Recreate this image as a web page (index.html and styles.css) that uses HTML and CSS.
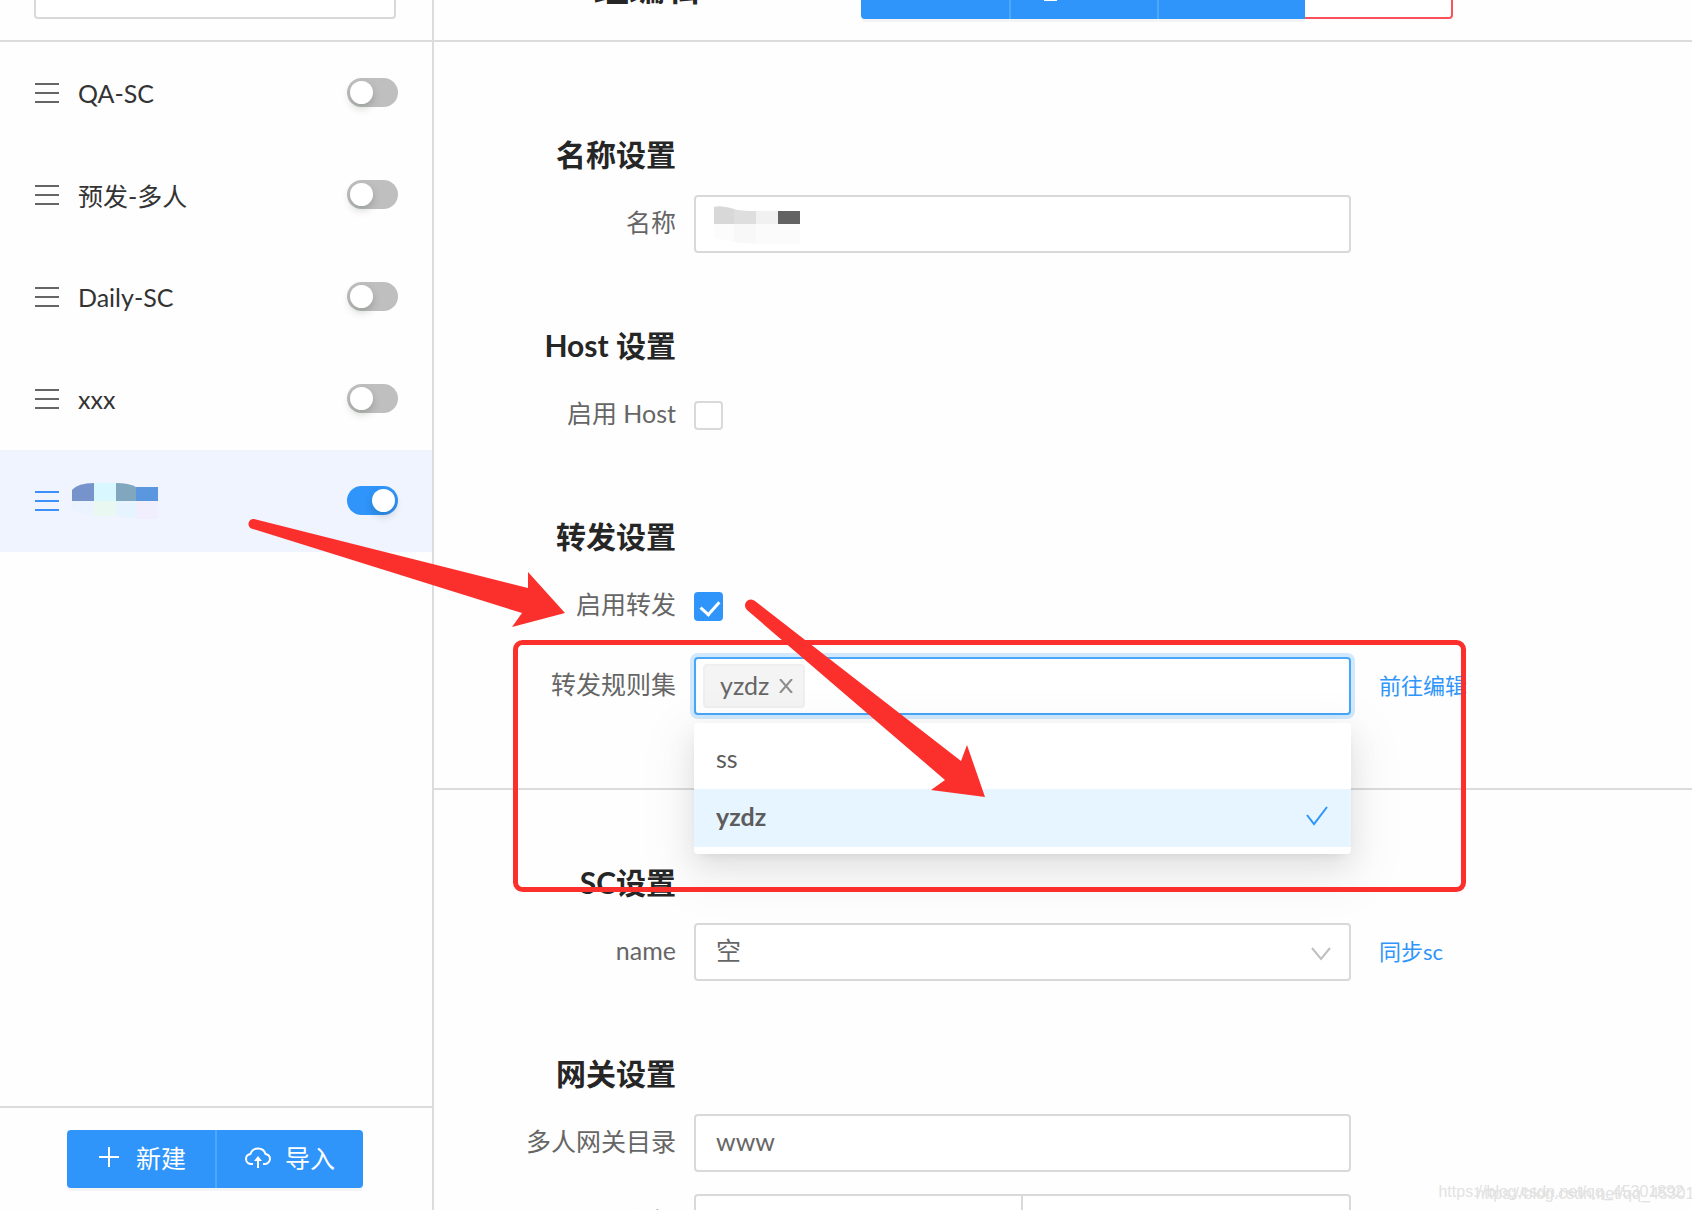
FILE: index.html
```html
<!DOCTYPE html>
<html lang="zh-CN">
<head>
    <meta charset="UTF-8">
    <meta name="viewport" content="width=device-width, initial-scale=1.0">
    <title>组编辑</title>
    <link rel="stylesheet" href="styles.css">
</head>
<body>

    <div class="app">
        <aside class="sidebar">
            <div class="topbar topbar-search">
                <input type="text" class="field" aria-label="搜索">
            </div>

            <ul class="groups">
                <li class="group">
                    <svg class="handle" viewBox="0 0 24 24"><path d="M0 3h24M0 12h24M0 21h24"/></svg>
                    <label class="group-name" for="g1">QA-SC</label>
                    <input type="checkbox" role="switch" class="switch" id="g1">
                </li>
                <li class="group">
                    <svg class="handle" viewBox="0 0 24 24"><path d="M0 3h24M0 12h24M0 21h24"/></svg>
                    <label class="group-name" for="g2">预发-多人</label>
                    <input type="checkbox" role="switch" class="switch" id="g2">
                </li>
                <li class="group">
                    <svg class="handle" viewBox="0 0 24 24"><path d="M0 3h24M0 12h24M0 21h24"/></svg>
                    <label class="group-name" for="g3">Daily-SC</label>
                    <input type="checkbox" role="switch" class="switch" id="g3">
                </li>
                <li class="group">
                    <svg class="handle" viewBox="0 0 24 24"><path d="M0 3h24M0 12h24M0 21h24"/></svg>
                    <label class="group-name" for="g4">xxx</label>
                    <input type="checkbox" role="switch" class="switch" id="g4">
                </li>
                <li class="group active">
                    <svg class="handle" viewBox="0 0 24 24"><path d="M0 3h24M0 12h24M0 21h24"/></svg>
                    <label class="group-name" for="g5">
                        <svg class="mosaic" viewBox="0 0 86 36" role="img" aria-label="yzdz">
                            <path fill="#7693cb" d="M0 18V7Q6 0 22 0V18z"/>
                            <path fill="#d9f7fe" d="M22 0h22v18H22z"/>
                            <path fill="#81a7be" d="M44 0Q57 0 64 4V18H44z"/>
                            <path fill="#5b97de" d="M64 4h22v14H64z"/>
                            <path fill="#ebf3ff" d="M0 18h22v14Q8 31 0 26z"/>
                            <path fill="#e9f8f0" d="M22 18h22v15H22z"/>
                            <path fill="#e5f4fe" d="M44 18h20v17Q52 35 44 32z"/>
                            <path fill="#f1effd" d="M64 18h22v18H64z"/>
                        </svg>
                    </label>
                    <input type="checkbox" role="switch" class="switch" id="g5" checked>
                </li>
            </ul>

            <div class="sidebar-foot">
                <div class="btn-group">
                    <button type="button" class="btn">
                        <svg class="icon" viewBox="0 0 26 26"><path d="M13 3v20M3 13h20"/></svg>
                        新建
                    </button>
                    <button type="button" class="btn">
                        <svg class="icon" viewBox="0 0 26 26">
                            <path d="M8 20H6.500C3.500 20 1 18 1 15S3 10.500 5.500 10C6.500 6.500 9.500 4.500 13 4.500S19.500 6.500 20.500 10C23 10.500 25 12.500 25 15S22.500 20 19.500 20H18M13 24V14"/>
                            <path class="solid" d="M13 12l4 5H9z"/>
                        </svg>
                        导入
                    </button>
                </div>
            </div>
        </aside>

        <main class="main">
            <header class="topbar topbar-main">
                <h1 class="title">组编辑</h1>
                <div class="btn-group">
                    <button type="button" class="btn" aria-label="保存"></button>
                    <button type="button" class="btn btn-icon" aria-label="复制">
                        <svg class="icon" viewBox="0 0 26 26"><path d="M8 3v20h11V3z"/></svg>
                    </button>
                    <button type="button" class="btn" aria-label="导出"></button>
                    <button type="button" class="btn btn-danger" aria-label="删除"></button>
                </div>
            </header>

            <form class="form">
                <section class="section">
                    <h2 class="heading">名称设置</h2>
                    <div class="row">
                        <label class="label" for="name">名称</label>
                        <div class="control">
                            <input type="text" class="field" id="name">
                            <svg class="mosaic mosaic-field" viewBox="0 0 86 38">
                                <path fill="#d8d8d8" d="M0 18V1Q6-1 20 3V18z"/>
                                <path fill="#dedede" d="M20 3Q26 5 42 5V18H20z"/>
                                <path fill="#f1f1f1" d="M42 5h22v13H42z"/>
                                <path fill="#626262" d="M64 5h22v13H64z"/>
                                <path fill="#fcfcfc" d="M0 18h20v18L0 32z"/>
                                <path fill="#f8f8f8" d="M20 18h22v20L20 36z"/>
                                <path fill="#fbfbfb" d="M42 18h44v20H42z"/>
                            </svg>
                        </div>
                    </div>
                </section>

                <section class="section">
                    <h2 class="heading">Host 设置</h2>
                    <div class="row">
                        <label class="label" for="host-on">启用 Host</label>
                        <input type="checkbox" class="check" id="host-on">
                    </div>
                </section>

                <section class="section">
                    <h2 class="heading">转发设置</h2>
                    <div class="row">
                        <label class="label" for="forward-on">启用转发</label>
                        <input type="checkbox" class="check" id="forward-on" checked>
                    </div>
                    <div class="row">
                        <label class="label" for="rules">转发规则集</label>
                        <div class="control">
                            <div class="field tags">
                                <span class="tag">yzdz
                                    <button type="button" class="tag-close" aria-label="移除">
                                        <svg viewBox="0 0 14 14"><path d="M1 0l12 14M13 0L1 14"/></svg>
                                    </button>
                                </span>
                                <input type="text" class="tags-input" id="rules" role="combobox" aria-expanded="true" aria-controls="rules-list">
                            </div>
                            <ul class="dropdown" id="rules-list" role="listbox">
                                <li class="option" role="option">ss</li>
                                <li class="option selected" role="option" aria-selected="true">yzdz
                                    <svg class="option-check" viewBox="0 0 24 20"><path d="M2 9l7 9L22 1"/></svg>
                                </li>
                            </ul>
                        </div>
                        <a class="link" href="#">前往编辑</a>
                    </div>
                </section>

                <hr class="divider">

                <section class="section">
                    <h2 class="heading">SC设置</h2>
                    <div class="row">
                        <label class="label" for="sc-name">name</label>
                        <div class="control">
                            <select class="field" id="sc-name">
                                <option>空</option>
                            </select>
                            <svg class="arrow" viewBox="0 0 20 14"><path d="M1 1l9 11 9-11"/></svg>
                        </div>
                        <a class="link" href="#">同步sc</a>
                    </div>
                </section>

                <section class="section">
                    <h2 class="heading">网关设置</h2>
                    <div class="row">
                        <label class="label" for="gateway">多人网关目录</label>
                        <div class="control">
                            <input type="text" class="field" id="gateway" value="www">
                        </div>
                    </div>
                    <div class="row">
                        <label class="label" for="gateway-host">主机</label>
                        <div class="control pair">
                            <input type="text" class="field" id="gateway-host">
                            <input type="text" class="field" aria-label="端口">
                        </div>
                    </div>
                </section>
            </form>
        </main>
    </div>

    <!-- red guide marks over the form -->
    <svg class="marks" viewBox="0 0 1692 1210">
        <rect x="515.500" y="642.500" width="948" height="247" rx="7"/>
        <path d="M254 519L528 588V572L565 613L512 627L522 613L253 529A5 5 0 0 1 254 519z"/>
        <path d="M755 601L961 761L967 745L985 797L931 790L945 780L747 610A5 5 0 0 1 755 601z"/>
    </svg>
    <div class="watermark">https://blog.csdn.net/qq_45301892</div>
    <div class="watermark watermark-second">https://blog.csdn.net/qq_45301892</div>

</body>
</html>
```
FILE: styles.css
```css
* {
    box-sizing: border-box;
}
body {
    margin: 0;
    position: relative;
    height: 100vh;
    overflow: hidden;
    background: #fefefe;
    color: #666;
    font-family: Lato, "Noto Sans CJK SC", sans-serif;
    font-size: 25px;
}
ul {
    list-style: none;
    margin: 0;
    padding: 0;
}
svg {
    fill: none;
    stroke: currentColor;
    stroke-width: 2;
}
input, select, button {
    font: inherit;
    color: inherit;
}
.app {
    display: flex;
    height: 100vh;
}

/* top bars */
.topbar {
    display: flex;
    align-items: flex-end;
    flex: none;
    height: 42px;
    padding-bottom: 21px;
    border-bottom: 2px solid #dcdcdc;
    overflow: hidden;
}
.topbar-search {
    padding-left: 34px;
    padding-right: 36px;
}
.topbar-main {
    padding-left: 159px;
    gap: 160px;
}
.title {
    margin: 0;
    color: #262626;
    font-size: 36px;
    line-height: 64px;
    flex: none;
}

/* sidebar */
.sidebar {
    display: flex;
    flex-direction: column;
    flex: none;
    width: 434px;
    border-right: 2px solid #dcdcdc;
}
.groups {
    flex: 1;
}
.group {
    display: flex;
    align-items: center;
    gap: 19px;
    height: 102px;
    padding: 0 34px 1px 35px;
    color: #333;
}
.group.active {
    background: #f0f4ff;
}
.handle {
    width: 24px;
    height: 24px;
    color: #666;
}
.active .handle {
    color: #3d8ffb;
}
.group-name {
    flex: 1;
}
.switch {
    appearance: none;
    margin: 0;
    width: 51px;
    height: 29px;
    padding: 3px;
    border-radius: 15px;
    background: #bfbfbf;
}
.switch::before {
    content: "";
    display: block;
    width: 23px;
    height: 23px;
    border-radius: 50%;
    background: white;
    box-shadow: 0 4px 8px rgba(0, 35, 11, 0.2);
}
.switch:checked {
    background: #2f95fb;
}
.switch:checked::before {
    margin-left: auto;
}
.mosaic {
    display: block;
    width: 86px;
    height: 36px;
    margin-left: -6px;
    stroke: none;
}
.sidebar-foot {
    display: flex;
    justify-content: center;
    padding: 22px 2px 22px 0;
    border-top: 2px solid #dcdcdc;
}

/* buttons */
.btn-group {
    display: flex;
}
.btn {
    display: flex;
    align-items: center;
    justify-content: center;
    gap: 14px;
    width: 148px;
    height: 58px;
    padding: 0 0 4px;
    border: 0;
    background: #2f95fb;
    color: white;
    box-shadow: 0 3px 0 rgba(0, 0, 0, 0.04);
}
.btn + .btn {
    border-left: 2px solid #4ba8fc;
}
.btn:first-child {
    border-radius: 4px 0 0 4px;
}
.btn:last-child {
    border-radius: 0 4px 4px 0;
}
.btn + .btn-danger {
    background: white;
    border: 2px solid #f9525a;
    border-left: 0;
    box-shadow: none;
}
.btn-icon {
    justify-content: flex-start;
    padding: 0 0 0 26px;
}
.icon {
    width: 26px;
    height: 26px;
}
.solid {
    fill: currentColor;
    stroke: none;
}

/* form */
.main {
    flex: 1;
    min-width: 0;
}
.form {
    padding-top: 92px;
}
.section {
    margin-bottom: 72px;
}
.heading {
    width: 242px;
    margin: 0 0 21px;
    color: #262626;
    font-size: 30px;
    font-weight: bold;
    line-height: 40px;
    text-align: right;
}
.row {
    display: grid;
    grid-template-columns: 242px 2fr 1fr;
    column-gap: 18px;
    align-items: center;
    min-height: 58px;
}
.row + .row {
    margin-top: 22px;
}
.label {
    text-align: right;
    line-height: 40px;
    padding-bottom: 4px;
}
.control {
    position: relative;
}
.field {
    display: block;
    appearance: none;
    width: 100%;
    height: 58px;
    padding: 0 20px 4px;
    border: 2px solid #d9d9d9;
    border-radius: 4px;
    background: white;
    outline: none;
}
.mosaic-field {
    position: absolute;
    left: 26px;
    top: 11px;
    height: 38px;
}
.check {
    appearance: none;
    margin: 0;
    width: 29px;
    height: 29px;
    border: 2px solid #d9d9d9;
    border-radius: 4px;
    background: white;
}
.check:checked {
    border: 0;
    background: #2f95fb;
}
.check:checked::before {
    content: "";
    display: block;
    width: 9px;
    height: 15px;
    margin: 5px 0 0 10px;
    border: solid white;
    border-width: 0 3px 3px 0;
    transform: rotate(42deg);
}
.tags {
    display: flex;
    align-items: center;
    padding: 0 7px;
    border-color: #48a7f9;
    box-shadow: 0 0 0 4px #d2e8fc;
}
.tag {
    display: flex;
    align-items: center;
    gap: 10px;
    height: 44px;
    padding: 0 10px 2px 15px;
    border: 2px solid #efefef;
    border-radius: 4px;
    background: #f4f4f4;
}
.tag-close {
    display: block;
    padding: 2px 0 0;
    border: 0;
    background: none;
    color: #8c8c8c;
}
.tag-close svg {
    display: block;
    width: 14px;
    height: 14px;
}
.tags-input {
    flex: 1;
    min-width: 0;
    border: 0;
    outline: none;
    background: none;
}
.dropdown {
    position: absolute;
    z-index: 1;
    top: 66px;
    left: 0;
    right: 0;
    padding: 8px 0 7px;
    border-radius: 4px;
    background: white;
    color: #5c5c5c;
    box-shadow: 0 5px 11px -7px rgba(0, 0, 0, 0.12), 0 11px 29px rgba(0, 0, 0, 0.08), 0 16px 50px 14px rgba(0, 0, 0, 0.05);
}
.option {
    display: flex;
    align-items: center;
    justify-content: space-between;
    height: 58px;
    padding: 0 22px 4px;
}
.option.selected {
    background: #e6f5ff;
    font-weight: bold;
}
.option-check {
    width: 24px;
    height: 20px;
    color: #2f95fb;
}
.arrow {
    position: absolute;
    right: 20px;
    top: 24px;
    width: 20px;
    height: 14px;
    color: #bfbfbf;
    pointer-events: none;
}
.row {
    grid-template-columns: 242px 657fr 323fr;
}
.link {
    padding: 0 0 4px 10px;
    color: #2f95fb;
    font-size: 22px;
    text-decoration: none;
}
.divider {
    margin: 73px 0 72px;
    border: 0;
    border-top: 2px solid #dcdcdc;
}
.pair {
    display: flex;
}
.pair .field:first-child {
    border-radius: 4px 0 0 4px;
}
.pair .field:last-child {
    border-left: 0;
    border-radius: 0 4px 4px 0;
}

/* overlays */
.marks {
    position: absolute;
    z-index: 2;
    top: 0;
    left: 0;
    width: 1692px;
    height: 1210px;
    pointer-events: none;
    stroke: none;
}
.marks path {
    fill: #fb302c;
}
.marks rect {
    stroke: #fb302c;
    stroke-width: 5;
}
.watermark {
    position: absolute;
    right: 8px;
    bottom: 9px;
    color: #e2e2e2;
    font-family: "Liberation Sans", sans-serif;
    font-size: 16px;
    white-space: nowrap;
}
.watermark-second {
    right: -29px;
    bottom: 7px;
}
```
